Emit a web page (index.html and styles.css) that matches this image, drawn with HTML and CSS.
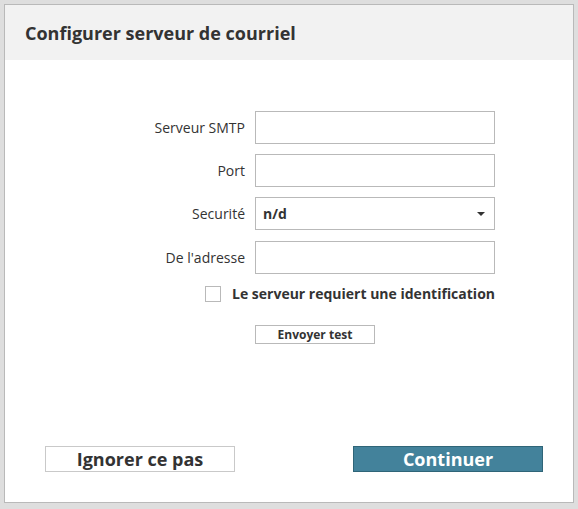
FILE: index.html
```html
<!DOCTYPE html>
<html lang="fr">
<head>
    <meta charset="UTF-8">
    <meta name="viewport" content="width=device-width, initial-scale=1.0">
    <title>Configurer serveur de courriel</title>
    <link rel="stylesheet" href="styles.css">
</head>
<body>
    <div class="panel">
        <div class="panel-header">
            <h1>Configurer serveur de courriel</h1>
        </div>

        <div class="panel-body">
            <div class="form-grid">
                <label for="smtp">Serveur SMTP</label>
                <input type="text" id="smtp">

                <label for="port">Port</label>
                <input type="text" id="port">

                <label for="security">Securité</label>
                <div class="select" id="security">
                    <span>n/d</span>
                    <span class="caret"></span>
                </div>

                <label for="from" class="last-label">De l'adresse</label>
                <input type="text" id="from" class="last-input">

                <div class="check-row">
                    <span class="checkbox"></span>
                    <span class="check-label">Le serveur requiert une identification</span>
                </div>

                <div class="test-row">
                    <button class="test-btn">Envoyer test</button>
                </div>
            </div>
        </div>

        <div class="panel-footer">
            <button class="skip-btn">Ignorer ce pas</button>
            <button class="continue-btn">Continuer</button>
        </div>
    </div>
</body>
</html>
```

FILE: styles.css
```css
* {
    margin: 0;
    padding: 0;
    box-sizing: border-box;
    font-family: "Open Sans", sans-serif;
}

body {
    background-color: #dedede;
    padding: 4px 4px 6px 4px;
    color: #333;
}

.panel {
    background-color: #fff;
    border: 1px solid #b9b9b9;
    height: 499px;
    display: flex;
    flex-direction: column;
}

.panel-header {
    background-color: #f2f2f2;
    height: 55px;
    padding-left: 20px;
    display: flex;
    align-items: center;
}

h1 {
    font-size: 18px;
    font-weight: 700;
    color: #333;
}

.panel-body {
    padding-top: 51px;
}

.form-grid {
    display: grid;
    grid-template-columns: 240px 240px;
    column-gap: 10px;
    row-gap: 10px;
    align-items: center;
}

.form-grid label {
    text-align: right;
    font-size: 14px;
    color: #333;
}

.form-grid input,
.select {
    height: 33px;
    border: 1px solid #b9b9b9;
    background-color: #fff;
    font-size: 14px;
}

.form-grid .last-label,
.form-grid .last-input {
    margin-top: 1px;
}

.select {
    display: flex;
    align-items: center;
    justify-content: space-between;
    padding: 0 9px 0 7px;
    font-weight: 700;
}

.caret {
    width: 0;
    height: 0;
    border-left: 4px solid transparent;
    border-right: 4px solid transparent;
    border-top: 4px solid #333;
}

.check-row {
    grid-column: 1 / 3;
    display: flex;
    justify-content: flex-end;
    align-items: center;
    gap: 11px;
}

.checkbox {
    width: 16px;
    height: 16px;
    border: 1px solid #b9b9b9;
    background-color: #fff;
}

.check-label {
    font-size: 14px;
    font-weight: 700;
}

.test-row {
    grid-column: 2;
    margin-top: 9px;
}

button {
    font-weight: 700;
    cursor: pointer;
    color: #333;
}

.test-btn {
    width: 120px;
    height: 19px;
    background-color: #fff;
    border: 1px solid #b9b9b9;
    font-size: 12px;
    line-height: 17px;
}

.panel-footer {
    margin-top: auto;
    padding: 0 30px 30px 40px;
    display: flex;
    justify-content: space-between;
}

.skip-btn,
.continue-btn {
    width: 190px;
    height: 26px;
    font-size: 18px;
    line-height: 24px;
}

.skip-btn {
    background-color: #fff;
    border: 1px solid #c9c9c9;
}

.continue-btn {
    background-color: #43829b;
    border: 1px solid #2f6578;
    color: #fff;
}
```
